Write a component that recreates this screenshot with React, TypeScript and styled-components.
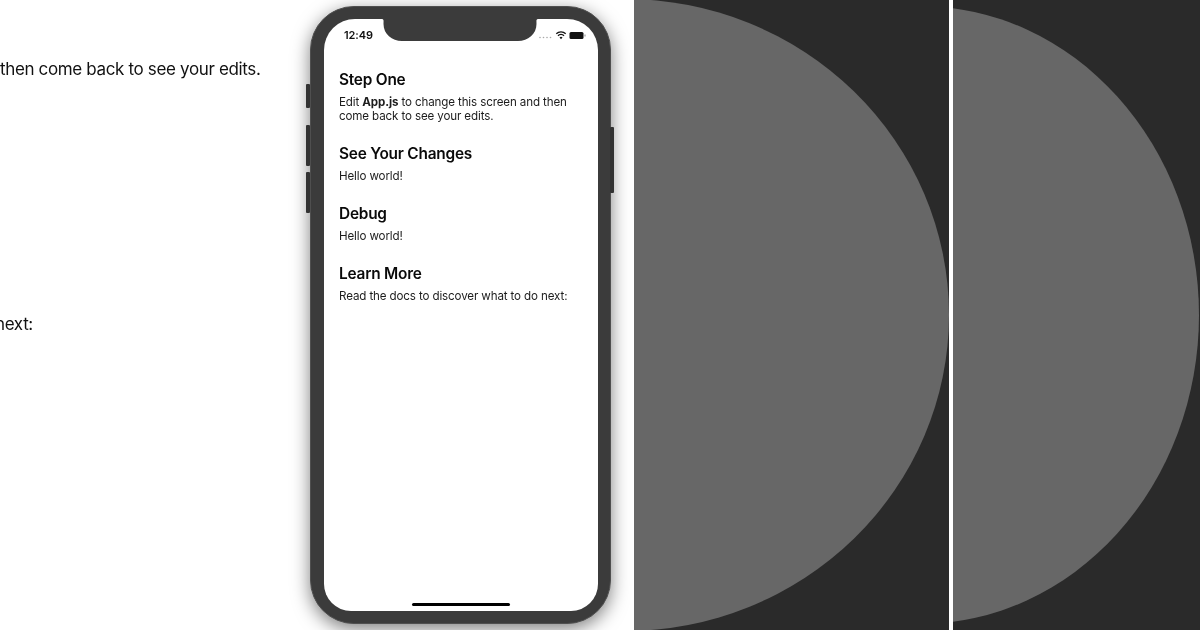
import React from 'react'
import styled, { createGlobalStyle } from 'styled-components'

const GlobalStyle = createGlobalStyle`
  html, body {
    margin: 0;
    padding: 0;
    background: #fff;
  }
  body {
    font-family: Inter, "Liberation Sans", sans-serif;
    color: #111;
  }
`

const Page = styled.div`
  display: flex;
  width: 1200px;
  height: 630px;
  overflow: hidden;
  background: #fff;
`

const DocColumn = styled.div`
  flex: 0 0 310px;
  padding-top: 58px;
  font-size: 17px;
  line-height: 22px;
  letter-spacing: -0.35px;
  color: #111;
  white-space: nowrap;
  filter: blur(0.3px);
`

const DocLine = styled.div<{ $gap?: number }>`
  margin-top: ${p => p.$gap || 0}px;
  margin-left: -5px;
  &:first-child {
    margin-left: 0;
  }
`

const PhoneColumn = styled.div`
  flex: 0 0 324px;
  padding-top: 6px;
`

const Phone = styled.div`
  position: relative;
  box-sizing: border-box;
  display: flex;
  width: 301px;
  height: 618px;
  padding: 12px 12px 12px 13px;
  background: #3b3b3b;
  border: 1px solid #4f4f4f;
  border-radius: 44px;
  box-shadow: 0 5px 18px rgba(0, 0, 0, 0.5);
`

const ButtonRail = styled.div<{ $right?: boolean }>`
  position: absolute;
  top: ${p => (p.$right ? 120 : 77)}px;
  ${p => (p.$right ? 'right: -4px;' : 'left: -5px;')}
  display: flex;
  flex-direction: column;
  gap: 6px;
  filter: blur(0.4px);
`

const SideButton = styled.div<{ $height: number; $after?: number }>`
  width: 4px;
  height: ${p => p.$height}px;
  margin-bottom: ${p => p.$after || 0}px;
  background: #333;
  border-radius: 1px;
`

const Screen = styled.div`
  flex: 1;
  display: flex;
  flex-direction: column;
  background: #fff;
  border-radius: 31px 31px 27px 27px;
  overflow: hidden;
`

const StatusBar = styled.div`
  flex: none;
  display: flex;
  align-items: flex-start;
  padding: 0 12px 0 20px;
  height: 51px;
`

const Time = styled.span`
  flex: none;
  width: 38px;
  margin-top: 9px;
  font-size: 11px;
  line-height: 14px;
  font-weight: 600;
  letter-spacing: -0.1px;
  filter: blur(0.25px);
`

const NotchShape = styled.svg`
  flex: none;
  width: 156px;
  height: 22px;
`

const StatusIcons = styled.svg`
  flex: none;
  margin: 11px 0 0 1px;
  width: 47px;
  height: 10px;
  filter: blur(0.3px);
`

const Content = styled.div`
  flex: 1;
  display: flex;
  flex-direction: column;
  gap: 21px;
  padding: 0 15px;
  filter: blur(0.25px);
`

const Section = styled.section``

const Title = styled.h2`
  margin: 0 0 5px;
  font-size: 15.4px;
  line-height: 20px;
  font-weight: 600;
  letter-spacing: -0.22px;
  color: #0a0a0a;
`

const Body = styled.p`
  margin: 0;
  font-size: 11.6px;
  line-height: 14px;
  letter-spacing: -0.13px;
  color: #1c1c1c;
  b {
    font-weight: 700;
  }
`

const HomeBar = styled.div`
  flex: none;
  align-self: center;
  width: 98px;
  height: 3px;
  margin-bottom: 5px;
  background: #000;
  border-radius: 2px;
`

const CirclePanel = styled.div<{ $width: number }>`
  flex: 0 0 ${p => p.$width}px;
  display: flex;
  align-items: center;
  background: #2a2a2a;
  overflow: hidden;
`

// the shape is wider than what shows: $cut is how far its centre sits left of the panel
const Ellipse = styled.div<{ $rx: number; $ry: number; $cut: number }>`
  flex: none;
  width: ${p => p.$rx * 2}px;
  height: ${p => p.$ry * 2}px;
  margin-left: -${p => p.$rx + p.$cut}px;
  border-radius: 50%;
  background: #676767;
`

const Divider = styled.div`
  flex: 0 0 4px;
  background: #fff;
`

const sections = [
  { title: 'See Your Changes', body: 'Hello world!' },
  { title: 'Debug', body: 'Hello world!' },
  { title: 'Learn More', body: 'Read the docs to discover what to do next:' },
]

export default function App() {
  return (
    <Page>
      <GlobalStyle />
      <DocColumn>
        <DocLine>then come back to see your edits.</DocLine>
        <DocLine $gap={233}>next:</DocLine>
      </DocColumn>
      <PhoneColumn>
        <Phone>
          <ButtonRail>
            <SideButton $height={24} $after={11} />
            <SideButton $height={41} />
            <SideButton $height={41} />
          </ButtonRail>
          <ButtonRail $right>
            <SideButton $height={66} />
          </ButtonRail>
          <Screen>
            <StatusBar>
              <Time>12:49</Time>
              <NotchShape viewBox="0 0 156 22">
                <path
                  d="M0 0H156C154 0 154.500 2 154.500 5C154.500 15 146 22 136 22H20C10 22 1.500 15 1.500 5C1.500 2 2 0 0 0Z"
                  fill="#3b3b3b"
                />
              </NotchShape>
              <StatusIcons viewBox="0 0 47 10">
                <g fill="#a8a8a8">
                  <circle cx="1" cy="7.500" r=".8" />
                  <circle cx="4.500" cy="7.500" r=".8" />
                  <circle cx="8" cy="7.500" r=".8" />
                  <circle cx="11.500" cy="7.500" r=".8" />
                </g>
                <path d="M17.300 3.800a6.500 6.500 0 0 1 9.400 0M19 5.800a4 4 0 0 1 6 0" fill="none" stroke="#111" strokeWidth="1.300" />
                <path d="M20.500 7.600a2 2 0 0 1 3 0L22 9.300z" fill="#111" />
                <rect x="30.500" y="2" width="14" height="7" rx="1.500" fill="#111" />
                <rect x="45.500" y="4.500" width="1" height="2" fill="#888" />
              </StatusIcons>
            </StatusBar>
            <Content>
              <Section>
                <Title>Step One</Title>
                <Body>
                  Edit <b>App.js</b> to change this screen and then
                  <br />
                  come back to see your edits.
                </Body>
              </Section>
              {sections.map(s => (
                <Section key={s.title}>
                  <Title>{s.title}</Title>
                  <Body>{s.body}</Body>
                </Section>
              ))}
            </Content>
            <HomeBar />
          </Screen>
        </Phone>
      </PhoneColumn>
      <CirclePanel $width={315}>
        <Ellipse $rx={324} $ry={316} $cut={9} />
      </CirclePanel>
      <Divider />
      <CirclePanel $width={247}>
        <Ellipse $rx={279} $ry={309} $cut={33} />
      </CirclePanel>
    </Page>
  )
}
